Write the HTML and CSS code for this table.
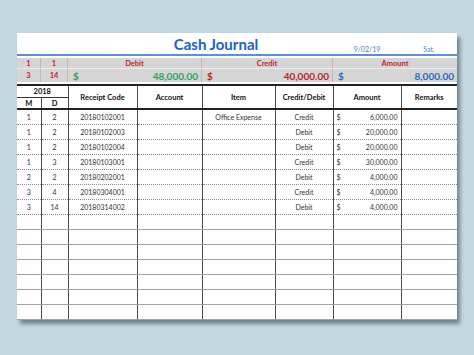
FILE: index.html
```html
<!DOCTYPE html>
<html>
<head>
<meta charset="utf-8">
<link rel="stylesheet" href="styles.css">
</head>
<body>
<div class="paper">
  <div class="titlebar">
    <div class="title">Cash Journal</div>
    <div class="date">9/02/19</div>
    <div class="day">Sat.</div>
  </div>
  <div class="band">
    <div class="b b1 red">1</div>
    <div class="b b1 red">1</div>
    <div class="b b1 red">Debit</div>
    <div class="b b1 red">Credit</div>
    <div class="b b1 red">Amount</div>
    <div class="b b2 red">3</div>
    <div class="b b2 red">14</div>
    <div class="b b2 money green"><span class="cur">$</span><span>48,000.00</span></div>
    <div class="b b2 money red"><span class="cur">$</span><span>40,000.00</span></div>
    <div class="b b2 money blue"><span class="cur">$</span><span>8,000.00</span></div>
  </div>
  <table class="journal">
    <colgroup>
      <col class="c-m"><col class="c-d"><col class="c-rc"><col class="c-ac"><col class="c-it"><col class="c-cd"><col class="c-am"><col class="c-re">
    </colgroup>
    <thead>
      <tr class="h1">
        <th colspan="2" class="yr">2018</th>
        <th rowspan="2">Receipt Code</th>
        <th rowspan="2">Account</th>
        <th rowspan="2">Item</th>
        <th rowspan="2">Credit/Debit</th>
        <th rowspan="2">Amount</th>
        <th rowspan="2">Remarks</th>
      </tr>
      <tr class="h2">
        <th>M</th>
        <th>D</th>
      </tr>
    </thead>
    <tbody>
      <tr class="data"><td>1</td><td>2</td><td>20180102001</td><td></td><td>Office Expense</td><td>Credit</td><td><div class="amt"><span>$</span><span>6,000.00</span></div></td><td></td></tr>
      <tr class="data"><td>1</td><td>2</td><td>20180102003</td><td></td><td></td><td>Debit</td><td><div class="amt"><span>$</span><span>20,000.00</span></div></td><td></td></tr>
      <tr class="data"><td>1</td><td>2</td><td>20180102004</td><td></td><td></td><td>Debit</td><td><div class="amt"><span>$</span><span>20,000.00</span></div></td><td></td></tr>
      <tr class="data"><td>1</td><td>3</td><td>20180103001</td><td></td><td></td><td>Credit</td><td><div class="amt"><span>$</span><span>30,000.00</span></div></td><td></td></tr>
      <tr class="data"><td>2</td><td>2</td><td>20180202001</td><td></td><td></td><td>Debit</td><td><div class="amt"><span>$</span><span>4,000.00</span></div></td><td></td></tr>
      <tr class="data"><td>3</td><td>4</td><td>20180304001</td><td></td><td></td><td>Credit</td><td><div class="amt"><span>$</span><span>4,000.00</span></div></td><td></td></tr>
      <tr class="data"><td>3</td><td>14</td><td>20180314002</td><td></td><td></td><td>Debit</td><td><div class="amt"><span>$</span><span>4,000.00</span></div></td><td></td></tr>
      <tr class="empty"><td></td><td></td><td></td><td></td><td></td><td></td><td></td><td></td></tr>
      <tr class="empty"><td></td><td></td><td></td><td></td><td></td><td></td><td></td><td></td></tr>
      <tr class="empty"><td></td><td></td><td></td><td></td><td></td><td></td><td></td><td></td></tr>
      <tr class="empty"><td></td><td></td><td></td><td></td><td></td><td></td><td></td><td></td></tr>
      <tr class="empty"><td></td><td></td><td></td><td></td><td></td><td></td><td></td><td></td></tr>
      <tr class="empty"><td></td><td></td><td></td><td></td><td></td><td></td><td></td><td></td></tr>
      <tr class="empty"><td></td><td></td><td></td><td></td><td></td><td></td><td></td><td></td></tr>
    </tbody>
  </table>
</div>
</body>
</html>
```
FILE: styles.css
```css
html, body {
  margin: 0;
  padding: 0;
}
body {
  width: 474px;
  height: 355px;
  background: #c4d9df;
  font-family: Lato, "Noto Sans", sans-serif;
  overflow: hidden;
  padding-top: 33px;
  box-sizing: border-box;
}
.paper {
  margin-left: 17px;
  width: 440px;
  height: 287px;
  background: #ffffff;
  box-shadow: 3px 4px 4px rgba(40, 60, 70, 0.55);
  display: flex;
  flex-direction: column;
}
.titlebar {
  height: 21px;
  border-bottom: 2px solid #5d8fd9;
  display: grid;
  grid-template-columns: 316px 68px 56px;
  align-items: end;
  color: #2060c8;
}
.title {
  font-size: 15px;
  font-weight: 700;
  text-align: center;
  padding-left: 82px;
  padding-bottom: 2px;
  line-height: 16px;
}
.date, .day {
  font-size: 7px;
  text-align: center;
  padding-bottom: 1px;
  color: #4b7fd0;
}
.band {
  margin-top: 2px;
  display: grid;
  grid-template-columns: 24px 27px 134px 131px 124px;
  grid-template-rows: 11px 13px;
  background: #d5d5d5;
}
.b {
  display: flex;
  align-items: center;
  justify-content: center;
  font-weight: 700;
  border-right: 1px solid #bcbcbc;
  box-sizing: border-box;
}
.b:nth-child(5), .b:nth-child(10) {
  border-right: none;
}
.b1 {
  font-size: 7.5px;
  border-bottom: 1px solid #ececec;
}
.b2 {
  font-size: 7.5px;
}
.money {
  justify-content: space-between;
  padding: 0 3px 0 5px;
  font-size: 10px;
}
.money .cur {
  font-size: 10px;
}
.red { color: #c2222b; }
.green { color: #2aa35c; }
.blue { color: #2c68c6; }
.journal {
  margin-top: 2px;
  width: 440px;
  border-collapse: collapse;
  table-layout: fixed;
  font-size: 7px;
  color: #333;
}
.c-m { width: 24px; }
.c-d { width: 27px; }
.c-rc { width: 69px; }
.c-ac { width: 65px; }
.c-it { width: 73px; }
.c-cd { width: 58px; }
.c-am { width: 68px; }
.c-re { width: 56px; }
.journal th {
  font-weight: 700;
  font-size: 7.5px;
  padding: 0;
  border-left: 1px solid #4a4a4a;
  color: #111;
}
.journal th:first-child {
  border-left: none;
}
.h1 th {
  height: 11px;
  border-top: 2px solid #222;
  border-bottom: 2px solid #222;
}
.h1 .yr {
  border-bottom: 1px solid #333;
}
.h2 th {
  height: 10px;
  border-bottom: 2px solid #222;
}
.h2 th:first-child {
  border-left: none;
}
.journal td {
  height: 14px;
  padding: 0;
  text-align: center;
  border-left: 1px solid #4a4a4a;
}
.journal td:first-child {
  border-left: none;
}
.data td {
  border-bottom: 1px dotted #8a8a8a;
}
.empty td {
  border-bottom: 1px solid #a0a0a0;
}
.amt {
  display: flex;
  justify-content: space-between;
  padding: 0 3px 0 3px;
}
```
